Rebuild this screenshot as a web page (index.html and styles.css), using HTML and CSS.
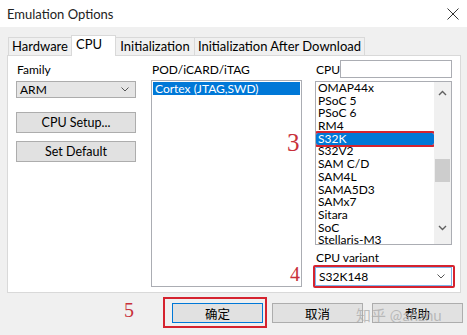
FILE: index.html
```html
<!DOCTYPE html>
<html lang="en">
<head>
    <meta charset="UTF-8">
    <title>Emulation Options</title>
    <link rel="stylesheet" href="styles.css">
</head>
<body>
    <div class="dialog">
        <div class="titlebar">
            <span class="title">Emulation Options</span>
            <svg class="close" width="12" height="12" viewBox="0 0 12 12">
                <path d="M0.5 0.5 L11.5 11.5 M11.5 0.5 L0.5 11.5" stroke="#333" stroke-width="1" fill="none"/>
            </svg>
        </div>

        <div class="tabs">
            <div class="tab tab-hw">Hardware</div>
            <div class="tab tab-active">CPU</div>
            <div class="tab tab-init">Initialization</div>
            <div class="tab tab-after">Initialization After Download</div>
        </div>

        <div class="panel">
            <div class="col col-family">
                <div class="label">Family</div>
                <div class="combo">
                    <span>ARM</span>
                    <svg width="8" height="5" viewBox="0 0 8 5"><path d="M0.5 0.5 L4 4 L7.5 0.5" stroke="#555" fill="none"/></svg>
                </div>
                <button class="btn btn-setup">CPU Setup...</button>
                <button class="btn btn-default">Set Default</button>
            </div>

            <div class="col col-pod">
                <div class="label">POD/iCARD/iTAG</div>
                <div class="listbox pod-list">
                    <div class="item selected">Cortex (JTAG,SWD)</div>
                </div>
            </div>

            <div class="col col-cpu">
                <div class="cpu-row">
                    <span class="cpu-label">CPU</span>
                    <div class="textbox"></div>
                </div>
                <div class="listbox cpu-list">
                    <div class="items">
                        <div class="item">OMAP44x</div>
                        <div class="item">PSoC 5</div>
                        <div class="item">PSoC 6</div>
                        <div class="item">RM4</div>
                        <div class="item selected marked">S32K</div>
                        <div class="item">S32V2</div>
                        <div class="item">SAM C/D</div>
                        <div class="item">SAM4L</div>
                        <div class="item">SAMA5D3</div>
                        <div class="item">SAMx7</div>
                        <div class="item">Sitara</div>
                        <div class="item">SoC</div>
                        <div class="item">Stellaris-M3</div>
                    </div>
                    <div class="scrollbar">
                        <svg class="arrow" width="9" height="6" viewBox="0 0 9 6"><path d="M1 5 L4.5 1.5 L8 5" stroke="#606060" stroke-width="1.4" fill="none"/></svg>
                        <div class="thumb"></div>
                        <svg class="arrow arrow-down" width="9" height="6" viewBox="0 0 9 6"><path d="M1 1 L4.5 4.5 L8 1" stroke="#606060" stroke-width="1.4" fill="none"/></svg>
                    </div>
                </div>
                <div class="label variant-label">CPU variant</div>
                <div class="marked-box">
                    <div class="combo combo-variant">
                        <span>S32K148</span>
                        <svg width="8" height="5" viewBox="0 0 8 5"><path d="M0.5 0.5 L4 4 L7.5 0.5" stroke="#555" fill="none"/></svg>
                    </div>
                </div>
            </div>

            <span class="note note-3">3</span>
            <span class="note note-4">4</span>
        </div>

        <div class="footer">
            <span class="note note-5">5</span>
            <div class="ok-box">
                <button class="btn btn-ok">确定</button>
            </div>
            <button class="btn btn-cancel">取消</button>
            <button class="btn btn-help">帮助</button>
            <span class="watermark">知乎 @anzhu</span>
        </div>
    </div>
</body>
</html>
```

FILE: styles.css
```css
body {
    margin: 0;
    background-color: #f0f0f0;
    font-family: Lato, "Noto Sans CJK SC", sans-serif;
    font-size: 12px;
    color: #000;
}

.dialog {
    width: 467px;
    height: 335px;
    position: relative;
    overflow: hidden;
}

.titlebar {
    height: 27px;
    background: #fff;
    display: flex;
    align-items: center;
    justify-content: space-between;
    padding: 0 8px 0 7px;
}

.title {
    font-size: 13px;
    color: #222;
}

/* tabs */
.tabs {
    display: flex;
    align-items: flex-end;
    height: 28px;
    padding-left: 8px;
}

.tab {
    height: 17px;
    line-height: 17px;
    font-size: 13px;
    background: #f0f0f0;
    border: 1px solid #d9d9d9;
    border-bottom: none;
    margin-right: -1px;
    text-align: center;
    white-space: nowrap;
    box-sizing: content-box;
}

.tab-hw { width: 62px; }
.tab-init { width: 78px; }
.tab-after { width: 169px; }

.tab-active {
    height: 21px;
    line-height: 17px;
    background: #fff;
    position: relative;
    z-index: 2;
    margin-bottom: -1px;
    text-align: left;
    padding-left: 4px;
    box-sizing: border-box;
    width: 45px;
}

/* panel */
.panel {
    position: relative;
    margin: 0 6px 0 7px;
    height: 238px;
    box-sizing: border-box;
    background: #fff;
    border: 1px solid #d9d9d9;
    padding: 4px 0 0 8px;
    display: flex;
}

.col {
    display: flex;
    flex-direction: column;
}

.col-family { width: 120px; }
.col-pod { width: 151px; margin-left: 15px; }
.col-cpu { width: 137px; margin-left: 13px; }

.label {
    height: 16px;
    line-height: 16px;
    margin-top: 2px;
    padding-left: 1px;
}

.combo {
    display: flex;
    align-items: center;
    justify-content: space-between;
    height: 17px;
    box-sizing: border-box;
    margin-top: 3px;
    padding: 0 6px 0 3px;
    background: #e5e5e5;
    border: 1px solid #acacac;
}

.btn {
    font-family: Lato, "Noto Sans CJK SC", sans-serif;
    font-size: 12.5px;
    background: #e1e1e1;
    border: 1px solid #adadad;
    padding: 0;
    height: 21px;
    color: #000;
}

.btn-setup { margin-top: 14px; }
.btn-default { margin-top: 8px; }

.listbox {
    border: 1px solid #abadb3;
    background: #fff;
    box-sizing: border-box;
}

.pod-list {
    margin-top: 2px;
    height: 207px;
    padding: 1px 1px 0 1px;
}

.item {
    height: 12.7px;
    line-height: 12.7px;
    padding-left: 2px;
    white-space: nowrap;
}

.item.selected {
    background: #0078d7;
    color: #fff;
}

.pod-list .item {
    height: 13px;
    line-height: 13px;
}

.cpu-row {
    display: flex;
    align-items: center;
    height: 18px;
}

.cpu-label {
    width: 24px;
    padding-left: 1px;
}

.textbox {
    flex: 1;
    height: 18px;
    box-sizing: border-box;
    border: 1px solid #abadb3;
    background: #fff;
}

.cpu-list {
    margin-top: 3px;
    height: 164px;
    display: flex;
    overflow: hidden;
}

.items {
    flex: 1;
    overflow: hidden;
}

.item.marked {
    outline: 2px solid #d5232f;
    border-radius: 2px;
    position: relative;
}

.scrollbar {
    width: 17px;
    background: #f0f0f0;
    display: flex;
    flex-direction: column;
    align-items: center;
}

.arrow {
    margin-top: 8px;
}

.thumb {
    width: 15px;
    height: 23px;
    margin-top: 63px;
    background: #cdcdcd;
}

.arrow-down {
    margin-top: 43px;
}

.variant-label {
    margin-top: 5px;
}

.marked-box {
    margin: -1px -3px 0 -2px;
    border: 2px solid #d5232f;
    border-radius: 2px;
    padding: 0 1px 0 0;
}

.combo-variant {
    margin-top: 0;
    height: 19px;
    background: #fff;
    border-color: #7eb4ea;
}

/* annotation numbers */
.note {
    position: absolute;
    font-family: "Liberation Serif", serif;
    font-size: 20px;
    color: #c8303a;
    line-height: 1;
}

.note-3 { left: 279px; top: 74px; font-size: 25px; }
.note-4 { left: 282px; top: 208px; }
.note-5 { left: 124px; top: 300px; }

/* footer */
.footer {
    display: flex;
    align-items: flex-start;
    padding: 4px 0 0 163px;
}

.ok-box {
    border: 2px solid #d5232f;
    padding: 4px 2px 3px 7px;
}

.btn-ok {
    width: 91px;
    height: 20px;
    border-color: #0078d7;
}

.btn-cancel {
    width: 91px;
    height: 20px;
    margin: 6px 0 0 5px;
}

.btn-help {
    width: 91px;
    height: 20px;
    margin: 6px 0 0 9px;
}

.watermark {
    position: absolute;
    left: 356px;
    top: 304px;
    font-size: 15px;
    color: rgba(170, 170, 170, 0.75);
    white-space: nowrap;
}
```
